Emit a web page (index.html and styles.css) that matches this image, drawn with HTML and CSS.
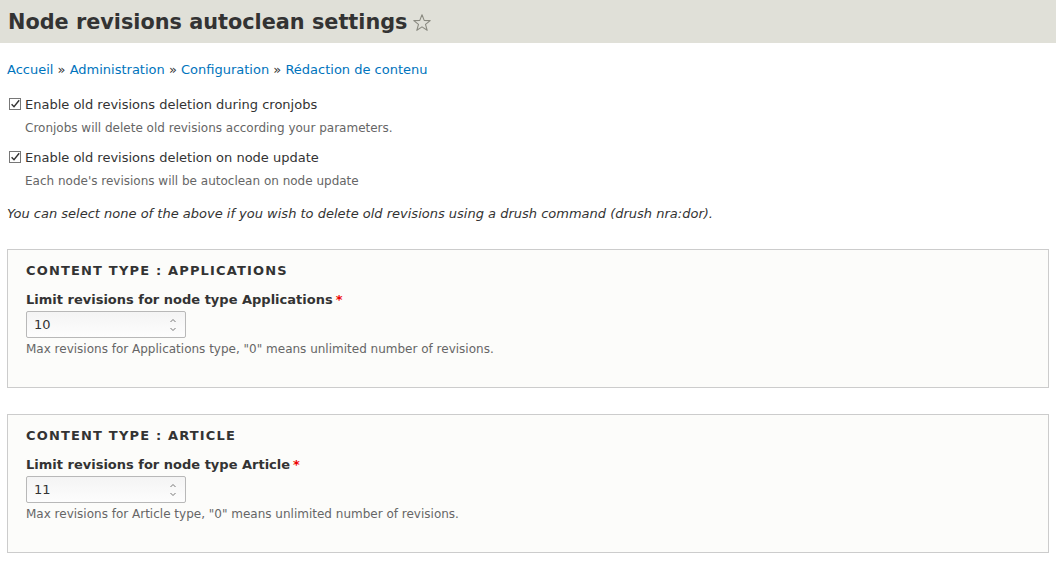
FILE: index.html
```html
<!DOCTYPE html>
<html lang="fr">
<head>
<meta charset="utf-8">
<title>Node revisions autoclean settings</title>
<link rel="stylesheet" href="styles.css">
</head>
<body>
<header class="page-header">
  <h1 class="page-title">Node revisions autoclean settings <span class="star"><svg width="20" height="20" viewBox="0 0 20 20"><path d="M10 1.8 L12.2 7.4 L18.2 7.6 L13.5 11.4 L15.2 17.3 L10 13.9 L4.8 17.3 L6.5 11.4 L1.8 7.6 L7.8 7.4 Z" fill="none" stroke="#8a8a80" stroke-width="1.1" stroke-linejoin="round"/></svg></span></h1>
</header>
<main class="content">
  <nav class="breadcrumb">
    <a href="#">Accueil</a> » <a href="#">Administration</a> » <a href="#">Configuration</a> » <a href="#">Rédaction de contenu</a>
  </nav>

  <div class="check-item">
    <div class="check-row">
      <span class="checkbox"><svg width="12" height="12" viewBox="0 0 12 12"><rect x="0.5" y="0.5" width="11" height="11" fill="#fff" stroke="#777"/><path d="M2.6 6.2 L5 8.7 L10.2 2.2" fill="none" stroke="#333" stroke-width="1.4"/></svg></span>
      <span class="check-label">Enable old revisions deletion during cronjobs</span>
    </div>
    <div class="check-desc">Cronjobs will delete old revisions according your parameters.</div>
  </div>

  <div class="check-item">
    <div class="check-row">
      <span class="checkbox"><svg width="12" height="12" viewBox="0 0 12 12"><rect x="0.5" y="0.5" width="11" height="11" fill="#fff" stroke="#777"/><path d="M2.6 6.2 L5 8.7 L10.2 2.2" fill="none" stroke="#333" stroke-width="1.4"/></svg></span>
      <span class="check-label">Enable old revisions deletion on node update</span>
    </div>
    <div class="check-desc">Each node's revisions will be autoclean on node update</div>
  </div>

  <p class="note">You can select none of the above if you wish to delete old revisions using a drush command (drush nra:dor).</p>

  <section class="fieldset">
    <h2 class="legend">Content type : Applications</h2>
    <div class="field-label">Limit revisions for node type Applications<span class="req">*</span></div>
    <div class="number-input">
      <span class="value">10</span>
      <svg class="spin" width="8" height="16" viewBox="0 0 8 16"><path d="M1.5 5 L4 2.5 L6.5 5 M1.5 11 L4 13.5 L6.5 11" fill="none" stroke="#666" stroke-width="0.9"/></svg>
    </div>
    <div class="field-desc">Max revisions for Applications type, "0" means unlimited number of revisions.</div>
  </section>

  <section class="fieldset">
    <h2 class="legend">Content type : Article</h2>
    <div class="field-label">Limit revisions for node type Article<span class="req">*</span></div>
    <div class="number-input">
      <span class="value">11</span>
      <svg class="spin" width="8" height="16" viewBox="0 0 8 16"><path d="M1.5 5 L4 2.5 L6.5 5 M1.5 11 L4 13.5 L6.5 11" fill="none" stroke="#666" stroke-width="0.9"/></svg>
    </div>
    <div class="field-desc">Max revisions for Article type, "0" means unlimited number of revisions.</div>
  </section>
</main>
</body>
</html>
```

FILE: styles.css
```css
html, body {
  margin: 0;
  padding: 0;
  background: #fff;
}
body {
  font-family: "DejaVu Sans", "Lucida Grande", sans-serif;
  color: #333;
  font-size: 13px;
}
.page-header {
  background: #e0e0d8;
  height: 43px;
  display: flex;
  align-items: center;
  padding: 0 8px;
}
.page-title {
  margin: 0;
  font-size: 20.8px;
  font-weight: bold;
  color: #333;
  display: flex;
  align-items: center;
  gap: 5px;
  line-height: 1;
  padding-top: 1px;
}
.star {
  display: inline-flex;
  margin-top: 1px;
}
.content {
  padding: 0 7px;
}
.breadcrumb {
  margin-top: 19px;
  font-size: 13px;
  line-height: 16px;
  color: #333;
}
.breadcrumb a {
  color: #0074bd;
  text-decoration: none;
}
.check-item {
  margin-top: 19px;
}
.check-item + .check-item {
  margin-top: 15px;
}
.check-row {
  display: flex;
  align-items: center;
  gap: 4px;
  line-height: 16px;
  padding-left: 2px;
}
.checkbox {
  display: inline-flex;
  margin-top: -3px;
}
.check-label {
  font-size: 13px;
  color: #333;
}
.check-desc {
  font-size: 12px;
  color: #666;
  margin-top: 8px;
  padding-left: 18px;
  line-height: 14px;
}
.note {
  margin: 18px 0 0;
  font-style: italic;
  font-size: 13px;
  line-height: 16px;
}
.fieldset {
  margin-top: 27px;
  border: 1px solid #ccc;
  background: #fcfcfa;
  padding: 13px 18px 0;
  height: 124px;
}
.fieldset + .fieldset {
  margin-top: 26px;
}
.legend {
  margin: 0;
  font-size: 13px;
  font-weight: bold;
  text-transform: uppercase;
  letter-spacing: 0.09em;
  line-height: 16px;
  color: #333;
}
.field-label {
  margin-top: 13px;
  font-size: 13px;
  font-weight: bold;
  line-height: 16px;
}
.req {
  color: #e00;
  margin-left: 3px;
}
.number-input {
  margin-top: 3px;
  height: 25px;
  border: 1px solid #b8b8b8;
  border-radius: 2px;
  background: linear-gradient(#f4f4f4, #fdfdfd);
  display: flex;
  align-items: center;
  justify-content: space-between;
  padding: 0 8px 0 7px;
  box-sizing: content-box;
  width: 143px;
}
.value {
  font-size: 13px;
  color: #333;
}
.spin {
  display: block;
}
.field-desc {
  margin-top: 4px;
  font-size: 12px;
  line-height: 14px;
  color: #666;
}
```
